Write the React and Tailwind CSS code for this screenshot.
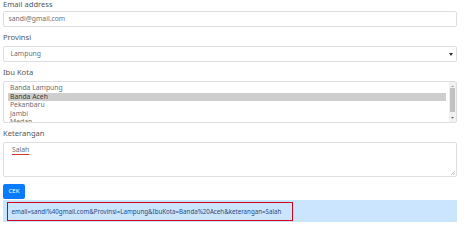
import React from "react";

const Label = ({ children, first }) => (
  <div className={`${first ? "-mt-[1px]" : "mt-[5px]"} mb-[4px] h-[10px] text-[7.6px] leading-[10px] text-[#52585e]`}>
    {children}
  </div>
);

const cities = ["Banda Lampung", "Banda Aceh", "Pekanbaru", "Jambi", "Medan"];

export default function App() {
  return (
    <div className="w-[474px] h-[238px] overflow-hidden bg-white font-['Noto_Sans',sans-serif]">
      <div className="ml-[3px] w-[454px] flex flex-col">
        {/* email */}
        <Label first>Email address</Label>
        <div className="-mt-[2px] h-[16px] border border-[#dcdfe2] rounded-[2px] px-[4.5px] flex items-center text-[6.8px] text-[#6a7076]">
          sandi@gmail.com
        </div>

        {/* provinsi */}
        <Label>Provinsi</Label>
        <div className="h-[16px] border border-[#dcdfe2] rounded-[2px] pl-[6.5px] pr-[3px] flex items-center justify-between text-[6.8px] text-[#6a7076]">
          <span>Lampung</span>
          <svg width="4" height="3" viewBox="0 0 4 3">
            <path d="M0 0h4L2 3z" fill="#333" />
          </svg>
        </div>

        {/* ibu kota */}
        <Label>Ibu Kota</Label>
        <div className="h-[42px] border border-[#dcdfe2] rounded-[2px] flex overflow-hidden">
          <div className="flex-1 pl-[4px] pr-[3px] pt-[2px] flex flex-col text-[6.8px] text-[#6a7076]">
            {cities.map((c) => (
              <div
                key={c}
                className={`h-[8.6px] shrink-0 leading-[8.6px] pl-[2px] ${c === "Banda Aceh" ? "bg-[#cecece] text-[#3a3a3a]" : ""}`}
              >
                {c}
              </div>
            ))}
          </div>
          <div className="w-[7px] bg-[#f1f1f1] flex flex-col items-center">
            <svg width="3" height="5" viewBox="0 0 3 5" className="mt-[1px]">
              <path d="M0 4L1.5 2.5L3 4z" fill="#a3a3a3" />
            </svg>
            <div className="w-[5px] h-[24px] bg-[#c1c1c1]" />
            <div className="flex-1" />
            <svg width="3" height="5" viewBox="0 0 3 5" className="mb-[1px]">
              <path d="M0 1L1.5 2.5L3 1z" fill="#505050" />
            </svg>
          </div>
        </div>

        {/* keterangan */}
        <Label>Keterangan</Label>
        <div className="relative h-[35px] border border-[#dcdfe2] rounded-[2px] px-[8px] pt-[2px] text-[6.8px] text-[#6a7076]">
          <span className="underline decoration-[#e03131] decoration-[0.8px] underline-offset-[1.5px]">
            Salah
          </span>
          <svg width="4" height="4" viewBox="0 0 4 4" className="absolute right-[1px] bottom-[1px]">
            <path d="M4 0L0 4M4 2L2 4" stroke="#9a9a9a" strokeWidth="0.6" />
          </svg>
        </div>

        {/* tombol */}
        <div className="mt-[7px] w-[22px] h-[15px] rounded-[2px] bg-[#0a7bff] flex items-center justify-center text-[6px] text-white">
          CEK
        </div>

        {/* hasil */}
        <div className="mt-[1px] h-[22px] bg-[#cce5ff] pl-[4px] pt-[2px]">
          <div className="w-[286px] h-[19px] border-[1.5px] border-[#d0021b] pl-[3.5px] flex items-center text-[6.2px] text-[#2a4a78] whitespace-nowrap">
            email=sandi%40gmail.com&amp;Provinsi=Lampung&amp;IbuKota=Banda%20Aceh&amp;keterangan=Salah
          </div>
        </div>
      </div>
    </div>
  );
}
